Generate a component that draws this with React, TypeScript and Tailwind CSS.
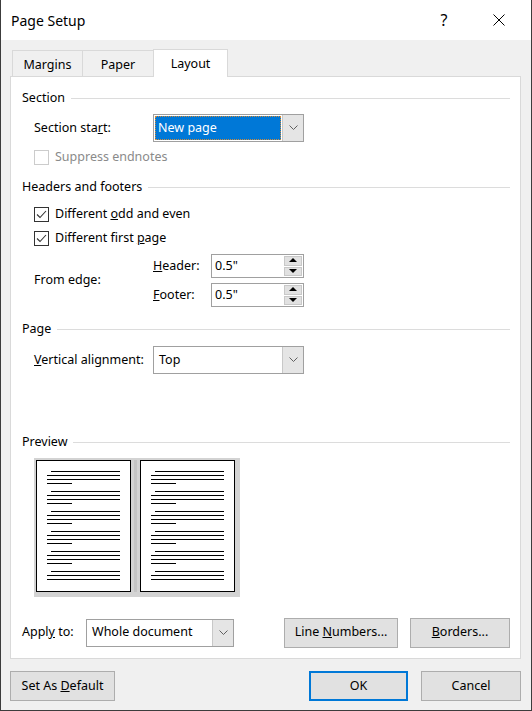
import type { ReactNode } from 'react';

const font = { fontFamily: '"Noto Sans", "Liberation Sans", sans-serif' };

function GroupHeading({ title }: { title: string }) {
  return (
    <div className="flex items-center h-[16px]">
      <span className="text-[12.5px] text-black leading-none">{title}</span>
      <div className="flex-1 h-px bg-[#dcdcdc] ml-[6px]" />
    </div>
  );
}

function Chevron() {
  return (
    <svg width="9" height="6" viewBox="0 0 9 6">
      <polyline points="0.5,0.5 4.5,4.5 8.5,0.5" fill="none" stroke="#606060" strokeWidth="1" />
    </svg>
  );
}

function ComboBox({
  value,
  width,
  height,
  selected = false,
}: {
  value: string;
  width: string;
  height: string;
  selected?: boolean;
}) {
  return (
    <div className={`flex ${width} ${height} border border-[#a0a0a0] bg-white`}>
      <div className="flex-1 flex items-center p-[1px] min-w-0">
        {selected ? (
          <div className="w-full h-full flex items-center bg-[#0078d7] border border-dotted border-[#d08a3a] text-white text-[12.5px] pl-[2px]">
            {value}
          </div>
        ) : (
          <span className="text-[12.5px] text-black pl-[4px]">{value}</span>
        )}
      </div>
      <div className="w-[21px] flex items-center justify-center bg-[#e5e5e5] border-l border-[#c8c8c8]">
        <Chevron />
      </div>
    </div>
  );
}

function CheckBox({ checked, disabled = false }: { checked: boolean; disabled?: boolean }) {
  return (
    <div
      className={`w-[15px] h-[15px] flex items-center justify-center bg-white border ${
        disabled ? 'border-[#cccccc]' : 'border-[#333333]'
      }`}
    >
      {checked && (
        <svg width="13" height="13" viewBox="0 0 13 13">
          <polyline points="2,6.5 5,9.5 11,3" fill="none" stroke="#333333" strokeWidth="1.1" />
        </svg>
      )}
    </div>
  );
}

function CheckRow({ checked, disabled, children }: { checked: boolean; disabled?: boolean; children: ReactNode }) {
  return (
    <div className="flex items-center h-[16px] pl-[12px]">
      <CheckBox checked={checked} disabled={disabled} />
      <span className={`ml-[6px] text-[12.5px] ${disabled ? 'text-[#8a8a8a]' : 'text-black'}`}>{children}</span>
    </div>
  );
}

function Arrow({ up }: { up: boolean }) {
  return (
    <svg width="8" height="5" viewBox="0 0 8 5">
      <polygon points={up ? '0,4 4,0 8,4' : '0,0 8,0 4,4'} fill="#000000" />
    </svg>
  );
}

function Spinner({ value }: { value: string }) {
  return (
    <div className="flex w-[93px] h-[24px] border border-[#a0a0a0] bg-white">
      <div className="flex-1 flex items-center pl-[3px] text-[12.5px] text-black">{value}</div>
      <div className="w-[20px] flex flex-col p-[1px] gap-[1px]">
        <div className="flex-1 flex items-center justify-center bg-[#e1e1e1] border border-[#c8c8c8]">
          <Arrow up />
        </div>
        <div className="flex-1 flex items-center justify-center bg-[#e1e1e1] border border-[#c8c8c8]">
          <Arrow up={false} />
        </div>
      </div>
    </div>
  );
}

function Button({
  children,
  width,
  isDefault = false,
}: {
  children: ReactNode;
  width: string;
  isDefault?: boolean;
}) {
  return (
    <button
      className={`${width} h-[30px] flex items-center justify-center bg-[#e1e1e1] text-[12.5px] text-black ${
        isDefault ? 'border-2 border-[#0078d7]' : 'border border-[#adadad]'
      }`}
    >
      <span>{children}</span>
    </button>
  );
}

// thumbnail of one page: paragraphs of three full lines and a short one
function PreviewPage() {
  const paragraphs = [0, 1, 2, 3, 4, 5];
  return (
    <svg width="95" height="132" viewBox="0 0 95 132" className="block">
      <rect x="0.5" y="0.5" width="94" height="131" fill="#ffffff" stroke="#000000" strokeWidth="1" />
      {paragraphs.map((p) => {
        const y = 11.5 + p * 20;
        return (
          <g key={p} stroke="#000000" strokeWidth="1">
            <line x1="15" y1={y} x2="84" y2={y} />
            <line x1="11" y1={y + 4} x2="84" y2={y + 4} />
            <line x1="11" y1={y + 8} x2="84" y2={y + 8} />
            {p < 5 && <line x1="11" y1={y + 12} x2="36" y2={y + 12} />}
          </g>
        );
      })}
    </svg>
  );
}

export default function App() {
  return (
    <div
      className="w-[532px] h-[711px] flex flex-col bg-[#f0f0f0] border-l border-r border-b border-[#3c3c3c] select-none"
      style={font}
    >
      {/* title bar */}
      <div className="h-[40px] bg-white flex items-center pl-[10px] shrink-0">
        <span className="text-[14px] text-black">Page Setup</span>
        <span className="ml-auto text-[16px] text-black w-[20px] text-center mr-[39px]">?</span>
        <svg width="12" height="12" viewBox="0 0 12 12" className="mr-[26px]">
          <line x1="0.5" y1="0.5" x2="11.5" y2="11.5" stroke="#000" strokeWidth="1" />
          <line x1="11.5" y1="0.5" x2="0.5" y2="11.5" stroke="#000" strokeWidth="1" />
        </svg>
      </div>

      {/* tabs */}
      <div className="flex items-end h-[27px] mt-[9px] ml-[11px]">
        <div className="w-[71px] h-[26px] pt-[3px] flex items-center justify-center border border-b-0 border-[#d9d9d9] text-[12.5px] text-black">
          Margins
        </div>
        <div className="w-[70px] h-[26px] pt-[3px] flex items-center justify-center border-t border-[#d9d9d9] text-[12.5px] text-black">
          Paper
        </div>
        <div className="relative z-10 w-[75px] h-[28px] mb-[-1px] pt-[1px] flex items-center justify-center bg-white border border-b-0 border-[#d9d9d9] text-[12.5px] text-black">
          Layout
        </div>
      </div>

      {/* tab page */}
      <div className="ml-[9px] w-[511px] h-[583px] bg-white border border-[#d9d9d9] pl-[11px] pr-[10px] flex flex-col">
        <div className="mt-[13px]">
          <GroupHeading title="Section" />
        </div>
        <div className="mt-[8px] flex items-center h-[28px] pl-[12px]">
          <span className="w-[119px] text-[12.5px] text-black">
            Section sta<u>r</u>t:
          </span>
          <ComboBox value="New page" width="w-[151px]" height="h-[28px]" selected />
        </div>
        <div className="mt-[7px]">
          <CheckRow checked={false} disabled>
            Suppress endnotes
          </CheckRow>
        </div>

        <div className="mt-[14px]">
          <GroupHeading title="Headers and footers" />
        </div>
        <div className="mt-[11px]">
          <CheckRow checked>
            Different <u>o</u>dd and even
          </CheckRow>
        </div>
        <div className="mt-[8px]">
          <CheckRow checked>
            Different first <u>p</u>age
          </CheckRow>
        </div>
        <div className="mt-[8px] flex items-center pl-[12px]">
          <span className="w-[119px] text-[12.5px] text-black">From edge:</span>
          <div className="flex flex-col gap-[5px]">
            <div className="flex items-center">
              <span className="w-[58px] text-[12.5px] text-black">
                <u>H</u>eader:
              </span>
              <Spinner value={'0.5"'} />
            </div>
            <div className="flex items-center">
              <span className="w-[58px] text-[12.5px] text-black">
                <u>F</u>ooter:
              </span>
              <Spinner value={'0.5"'} />
            </div>
          </div>
        </div>

        <div className="mt-[14px]">
          <GroupHeading title="Page" />
        </div>
        <div className="mt-[9px] flex items-center h-[28px] pl-[12px]">
          <span className="w-[119px] text-[12.5px] text-black">
            <u>V</u>ertical alignment:
          </span>
          <ComboBox value="Top" width="w-[151px]" height="h-[28px]" />
        </div>

        <div className="mt-[60px]">
          <GroupHeading title="Preview" />
        </div>
        <div className="mt-[8px] ml-[12px] w-[206px] flex bg-[#d3d3d3] pt-[2px] pl-[2px] pb-[5px] pr-[5px]">
          <PreviewPage />
          <div className="w-[9px] flex justify-center">
            <div className="w-[3px] bg-[#c4c4c4]" />
          </div>
          <PreviewPage />
        </div>

        <div className="mt-[21px] flex items-center h-[29px]">
          <span className="w-[64px] text-[12.5px] text-black">
            Appl<u>y</u> to:
          </span>
          <ComboBox value="Whole document" width="w-[148px]" height="h-[28px]" />
          <div className="ml-auto flex gap-[12px]">
            <Button width="w-[114px]">
              Line <u>N</u>umbers...
            </Button>
            <Button width="w-[100px]">
              <u>B</u>orders...
            </Button>
          </div>
        </div>
      </div>

      {/* dialog buttons */}
      <div className="mt-[12px] ml-[9px] mr-[10px] flex">
        <Button width="w-[105px]">
          Set As <u>D</u>efault
        </Button>
        <div className="ml-auto flex gap-[13px]">
          <Button width="w-[99px]" isDefault>
            OK
          </Button>
          <Button width="w-[100px]">Cancel</Button>
        </div>
      </div>
    </div>
  );
}
